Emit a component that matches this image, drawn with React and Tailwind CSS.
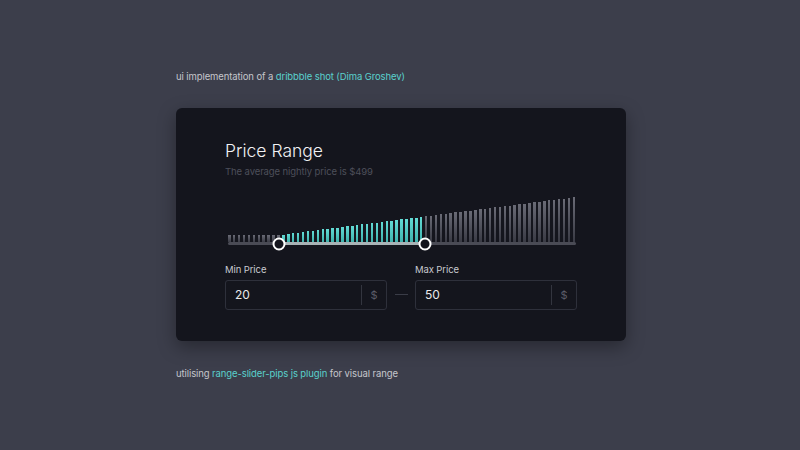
import React from 'react'

const BAR_COUNT = 71
const MIN_X = 51 // px from track start where min handle sits
const MAX_X = 197 // px from track start where max handle sits
const TRACK_W = 348

function barHeight(x) {
  if (x < MIN_X) return 7
  return 7 + (x - MIN_X) * 0.127
}

function PipsSlider() {
  const bars = Array.from({ length: BAR_COUNT }, (_, i) => {
    const x = (i * TRACK_W) / (BAR_COUNT - 1)
    const inRange = x >= MIN_X && x <= MAX_X + 1
    return { x, h: barHeight(x), inRange }
  })

  return (
    <div className="relative mx-[3px] mt-[16px] w-[348px]">
      <div className="flex h-[47px] items-end justify-between">
        {bars.map((b, i) => (
          <div
            key={i}
            className={
              b.inRange
                ? 'w-[2.5px] bg-gradient-to-b from-[#62dbd5] to-[#3fb3ae]'
                : 'w-[2.5px] bg-gradient-to-b from-[#6a6b76] to-[#3a3b45]'
            }
            style={{ height: `${b.h}px` }}
          />
        ))}
      </div>
      <div className="relative h-[3px] rounded-full bg-[#4a4b55]">
        <div
          className="absolute top-0 h-[3px] bg-[#a9b3b6]"
          style={{ left: `${MIN_X}px`, width: `${MAX_X - MIN_X}px` }}
        />
        <div
          className="absolute top-1/2 h-[13px] w-[13px] -translate-x-1/2 -translate-y-1/2 rounded-full border-[2.5px] border-white bg-[#14151d]"
          style={{ left: `${MIN_X}px` }}
        />
        <div
          className="absolute top-1/2 h-[13px] w-[13px] -translate-x-1/2 -translate-y-1/2 rounded-full border-[2.5px] border-white bg-[#14151d]"
          style={{ left: `${MAX_X}px` }}
        />
      </div>
    </div>
  )
}

function PriceInput({ label, value }) {
  return (
    <div className="flex w-[162px] flex-col">
      <div className="text-[9.5px] leading-[12px] tracking-[-0.1px] text-[#c9cad0]">{label}</div>
      <div className="mt-[4px] flex h-[30px] items-center rounded-[3px] border border-[#2e303b]">
        <div className="flex-1 pl-[9px] text-[12px] text-[#e8e9ec]">{value}</div>
        <div className="h-[20px] w-px bg-[#33353f]" />
        <div className="w-[24px] text-center text-[11px] text-[#5b5d68]">$</div>
      </div>
    </div>
  )
}

export default function App() {
  return (
    <div
      className="flex h-[450px] w-[800px] flex-col bg-[#3c3e4b] pl-[176px] pt-[70px]"
      style={{ fontFamily: 'Inter, "Noto Sans", sans-serif' }}
    >
      <p className="text-[9.5px] leading-[14px] tracking-[-0.1px] text-[#c5c6cc]">
        ui implementation of a{' '}
        <span className="text-[#5ad1cd]">dribbble shot (Dima Groshev)</span>
      </p>

      <div className="mt-[24px] w-[450px] rounded-[6px] bg-[#14151d] px-[49px] pb-[31px] pt-[32px] shadow-[0_6px_18px_rgba(0,0,0,0.35)]">
        <h1 className="text-[17.5px] font-light leading-[22px] text-[#f2f2f4]">Price Range</h1>
        <p className="mt-[3px] text-[9.5px] leading-[14px] tracking-[-0.1px] text-[#4d4f5a]">
          The average nightly price is $499
        </p>

        <PipsSlider />

        <div className="mt-[19px] flex items-end justify-between">
          <PriceInput label="Min Price" value="20" />
          <div className="mb-[15px] h-px w-[13px] bg-[#3a3c47]" />
          <PriceInput label="Max Price" value="50" />
        </div>
      </div>

      <p className="mt-[26px] text-[9.5px] leading-[14px] tracking-[-0.1px] text-[#c5c6cc]">
        utilising <span className="text-[#5ad1cd]">range-slider-pips js plugin</span> for visual
        range
      </p>
    </div>
  )
}
